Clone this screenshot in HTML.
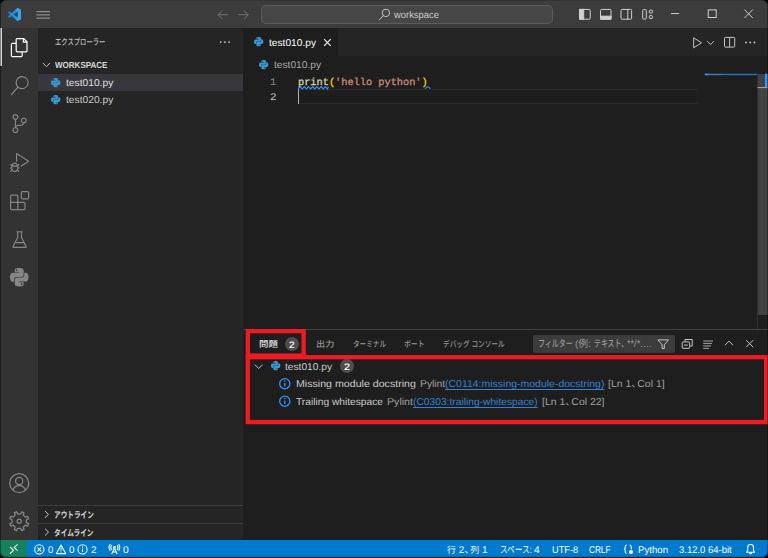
<!DOCTYPE html>
<html lang="ja">
<head>
<meta charset="utf-8">
<title>test010.py - workspace - Visual Studio Code</title>
<style>
html,body{margin:0;padding:0;background:#000;}
body{text-rendering:geometricPrecision;width:768px;height:558px;overflow:hidden;position:relative;font-family:"Liberation Sans","Noto Sans CJK JP",sans-serif;font-size:10.4px;color:#cccccc;}
#win{position:absolute;left:0;top:0;width:768px;height:558px;border-radius:6px 6px 6px 6px;overflow:hidden;background:#1e1e1e;}
.abs{position:absolute;}
.t{position:absolute;white-space:pre;line-height:1;transform-origin:0 0;}
svg{position:absolute;overflow:visible;}
#titlebar{left:0;top:0;width:768px;height:28px;background:#3c3c3c;}
#search{left:261px;top:5px;width:292px;height:18.5px;box-sizing:border-box;background:#464646;border:1px solid #5c5c5c;border-radius:5px;}
#activity{left:0;top:28px;width:38.4px;height:512.4px;background:#333333;}
#actind{left:0;top:28px;width:1.6px;height:38.4px;background:#d7d7d7;}
#sidebar{left:38.4px;top:28px;width:205px;height:512.4px;background:#252526;}
#selrow{left:38.4px;top:73.6px;width:204.6px;height:17.6px;background:#37373d;}
.hline{height:1px;background:#3c3c3c;}
#tabbar{left:243.4px;top:28px;width:525px;height:28px;background:#252526;}
#tab{left:243.4px;top:28px;width:94.6px;height:28px;background:#1e1e1e;}
#editor{left:243.4px;top:56px;width:525px;height:273px;background:#1e1e1e;}
#curline{left:298px;top:88.8px;width:400px;height:15.2px;box-sizing:border-box;border-top:1.2px solid #2a2a2a;border-bottom:1.2px solid #2a2a2a;}
#cursor{left:297.6px;top:89.4px;width:1.6px;height:14.2px;background:#aeafad;}
#vscroll{left:757px;top:73.6px;width:11px;height:241px;background:#424242;}
#vtrack{left:757px;top:73.6px;width:1px;height:255px;background:#303030;}
#panel{left:243.4px;top:328.6px;width:525px;height:212px;background:#1e1e1e;border-top:1px solid #424242;box-sizing:border-box;}
#filter{left:533px;top:334.6px;width:142px;height:18.8px;background:#3c3c3c;border-radius:2px;}
.badge{width:14.4px;height:14.4px;border-radius:7.2px;background:#4d4d4d;}
.red{box-sizing:border-box;border:4px solid #ed1c24;}
#status{left:0;top:540.4px;width:768px;height:17.6px;background:#007acc;color:#fff;}
#remote{left:0;top:540.4px;width:27px;height:17.6px;background:#16825d;}
.mono{font-family:"Liberation Mono",monospace;}
</style>
</head>
<body>
<div id="win">
<!-- TITLE BAR -->
<div class="abs" id="titlebar"></div>
<div class="abs" id="search"></div>
<svg style="left:8px;top:8px" width="13" height="13" viewBox="0 0 100 100"><defs><linearGradient id="vg" x1="0" y1="0" x2="1" y2="0"><stop offset="0" stop-color="#1683d2"/><stop offset="0.62" stop-color="#1f95e4"/><stop offset="0.75" stop-color="#2eaaf6"/><stop offset="1" stop-color="#2eaaf6"/></linearGradient></defs><path fill="url(#vg)" fill-rule="evenodd" d="M70.9119 99.3171C72.4869 99.9307 74.2828 99.8914 75.8725 99.1264L96.4608 89.2197C98.6242 88.1787 100 85.9892 100 83.5872V16.4133C100 14.0113 98.6243 11.8218 96.4609 10.7808L75.8725 0.873756C73.7862 -0.130129 71.3446 0.11576 69.5135 1.44695C69.252 1.63711 69.0028 1.84943 68.769 2.08341L29.3551 38.0415L12.1872 25.0096C10.589 23.7965 8.35363 23.8959 6.86933 25.2461L1.36303 30.2549C-0.452552 31.9064 -0.454633 34.7627 1.35853 36.417L16.2471 50.0001L1.35853 63.5832C-0.454633 65.2374 -0.452552 68.0938 1.36303 69.7453L6.86933 74.7541C8.35363 76.1043 10.589 76.2037 12.1872 74.9905L29.3551 61.9587L68.769 97.9167C69.3925 98.5406 70.1246 99.0104 70.9119 99.3171ZM75.0152 27.2989L45.1091 50.0001L75.0152 72.7012V27.2989Z"/></svg>
<svg style="left:0;top:0" width="768" height="28" viewBox="0 0 768 28" fill="none" stroke-linecap="butt">
<g stroke="#b4b4b4" stroke-width="0.85"><path d="M36.4 11.7H50M36.4 14.9H50M36.4 18.1H50"/></g>
<g stroke="#707070" stroke-width="1"><path d="M227.8 14.7H218M222.3 10.4L218 14.7l4.3 4.3"/><path d="M238.4 14.7H248.2M243.9 10.4l4.3 4.3-4.3 4.3"/></g>
<g stroke="#c4c4c4" stroke-width="1"><circle cx="385.9" cy="12.9" r="3.7"/><path d="M383.3 15.7L379 20"/></g>
<g stroke="#cfcfcf" stroke-width="1">
<rect x="579.5" y="9.4" width="10.7" height="9.8" rx="1"/><rect x="579.5" y="9.4" width="4.2" height="9.8" fill="#cfcfcf"/>
<rect x="600.5" y="9.4" width="10.5" height="9.8" rx="1"/><rect x="600.5" y="16.2" width="10.5" height="3" fill="#cfcfcf"/>
<rect x="621" y="9.4" width="10.6" height="9.8" rx="1"/><path d="M627.8 9.4V19.2"/>
<rect x="642.7" y="9.6" width="3.6" height="9.4" rx="0.8"/><rect x="649.4" y="10.2" width="3" height="2.9" rx="0.6"/><rect x="649.4" y="15.6" width="3" height="2.900" rx="0.6"/>
</g>
<g stroke="#e0e0e0" stroke-width="0.9"><path d="M671 13.6H679.2"/><rect x="708.2" y="9.9" width="8" height="7.6"/><path d="M744.4 9.6L752.8 18M752.8 9.6L744.4 18"/></g>
</svg>

<!-- ACTIVITY BAR -->
<div class="abs" id="activity"></div>
<div class="abs" id="actind"></div>
<svg style="left:9.6px;top:37.6px" width="19.2" height="19.2" viewBox="0 0 24 24" fill="#ffffff"><path d="M17.5 0h-9L7 1.5V6H2.5L1 7.5v15.07L2.5 24h12.07L16 22.57V18h4.7l1.3-1.43V4.5L17.5 0zm0 2.12l2.38 2.38H17.5V2.12zm-3 20.38h-12v-15H7v9.07L8.5 18h6v4.5zm6-6h-12v-15H16V6h4.5v10.5z"/></svg>
<svg style="left:9.6px;top:76px" width="19.2" height="19.2" viewBox="0 0 24 24" fill="#858585"><path d="M15.25 0a8.25 8.25 0 0 0-6.18 13.72L1 22.88l1.12 1.12 8.05-9.12A8.251 8.251 0 1 0 15.25.01V0zm0 15a6.75 6.75 0 1 1 0-13.5 6.75 6.75 0 0 1 0 13.5z"/></svg>
<svg style="left:9.6px;top:114.4px" width="19.2" height="19.2" viewBox="0 0 24 24" fill="#858585"><path d="M21.007 8.222A3.738 3.738 0 0 0 15.045 5.2a3.737 3.737 0 0 0 1.156 6.583 2.988 2.988 0 0 1-2.668 1.67h-2.99a4.456 4.456 0 0 0-2.989 1.165V7.4a3.737 3.737 0 1 0-1.494 0v9.117a3.776 3.776 0 1 0 1.816.099 2.99 2.99 0 0 1 2.668-1.667h2.99a4.484 4.484 0 0 0 4.223-3.039 3.736 3.736 0 0 0 3.25-3.687zM4.565 3.738a2.242 2.242 0 1 1 4.484 0 2.242 2.242 0 0 1-4.484 0zm4.484 16.441a2.242 2.242 0 1 1-4.484 0 2.242 2.242 0 0 1 4.484 0zm8.221-9.715a2.242 2.242 0 1 1 0-4.485 2.242 2.242 0 0 1 0 4.485z"/></svg>
<svg style="left:9.6px;top:152.8px" width="19.2" height="19.2" viewBox="0 0 24 24" fill="#858585"><path d="M10.94 13.5l-1.32 1.32a3.73 3.73 0 0 0-7.24 0L1.06 13.5 0 14.56l1.72 1.72-.22.22V18H0v1.5h1.5v.08c.077.489.214.966.41 1.42L0 22.94 1.06 24l1.65-1.65A4.308 4.308 0 0 0 6 24a4.31 4.31 0 0 0 3.29-1.65L10.94 24 12 22.94 10.09 21c.198-.464.336-.951.41-1.45v-.1H12V18h-1.5v-1.5l-.22-.22L12 14.56l-1.06-1.06zM6 13.5a2.25 2.25 0 0 1 2.25 2.25h-4.5A2.25 2.25 0 0 1 6 13.5zm3 6a3.33 3.33 0 0 1-3 3 3.33 3.33 0 0 1-3-3v-2.25h6v2.25zm14.76-9.9v1.26L13.5 17.37V15.6l8.5-5.37L9 2v9.46a5.07 5.07 0 0 0-1.5-.72V.63L8.64 0l15.12 9.6z"/></svg>
<svg style="left:9.6px;top:191.2px" width="19.2" height="19.2" viewBox="0 0 24 24" fill="#858585"><path d="M13.5 1.5L15 0h7.5L24 1.5V9l-1.5 1.5H15L13.5 9V1.5zm1.5 0V9h7.5V1.5H15zM0 15V6l1.5-1.5H9L10.5 6v7.5H18l1.5 1.5v7.5L18 24H1.5L0 22.5V15zm9-1.5V6H1.5v7.5H9zM9 15H1.5v7.5H9V15zm1.5 7.5H18V15h-7.5v7.5z"/></svg>
<svg style="left:9.6px;top:229.6px" width="19.2" height="19.2" viewBox="0 0 24 24" fill="none" stroke="#858585" stroke-width="1.5" stroke-linejoin="round"><path d="M8 2.2h8M9.6 2.2v7.3L3.9 20.3c-.4.8.1 1.5 1 1.5h14.2c.9 0 1.400-.7 1-1.500L14.400 9.500V2.200M6.300 15.800h11.400"/></svg>
<svg style="left:10.00px;top:268.40px" width="18.4" height="18.4" viewBox="0 0 24 24"><path fill="#858585" d="M14.25.18l.9.2.73.26.59.3.45.32.34.34.25.34.16.33.1.3.04.26.02.2-.01.13V8.5l-.05.63-.13.55-.21.46-.26.38-.3.31-.33.25-.35.19-.35.14-.33.1-.3.07-.26.04-.21.02H8.77l-.69.05-.59.14-.5.22-.41.27-.33.32-.27.35-.2.36-.15.37-.1.35-.07.32-.04.27-.02.21v3.06H3.17l-.21-.03-.28-.07-.32-.12-.35-.18-.36-.26-.36-.36-.35-.46-.32-.59-.28-.73-.21-.88-.14-1.05-.05-1.23.06-1.22.16-1.04.24-.87.32-.71.36-.57.4-.44.42-.33.42-.24.4-.16.36-.1.32-.05.24-.01h.16l.06.01h8.16v-.83H6.18l-.01-2.75-.02-.37.05-.34.11-.31.17-.28.25-.26.31-.23.38-.2.44-.18.51-.15.58-.12.64-.1.71-.06.77-.04.84-.02 1.27.05zm-6.3 1.98l-.23.33-.08.41.08.41.23.34.33.22.41.09.41-.09.33-.22.23-.34.08-.41-.08-.41-.23-.33-.33-.22-.41-.09-.41.09zm13.09 3.95l.28.06.32.12.35.18.36.27.36.35.35.47.32.59.28.73.21.88.14 1.04.05 1.23-.06 1.23-.16 1.04-.24.86-.32.71-.36.57-.4.45-.42.33-.42.24-.4.16-.36.09-.32.05-.24.02-.16-.01h-8.22v.82h5.84l.01 2.76.02.36-.05.34-.11.31-.17.29-.25.25-.31.24-.38.2-.44.17-.51.15-.58.13-.64.09-.71.07-.77.04-.84.01-1.27-.04-1.07-.14-.9-.2-.73-.25-.59-.3-.45-.33-.34-.34-.25-.34-.16-.33-.1-.3-.04-.25-.02-.2.01-.13v-5.34l.05-.64.13-.54.21-.46.26-.38.3-.32.33-.24.35-.2.35-.14.33-.1.3-.06.26-.04.21-.02.13-.01h5.84l.69-.05.59-.14.5-.21.41-.28.33-.32.27-.35.2-.36.15-.36.1-.35.07-.32.04-.28.02-.21V6.07h2.09l.14.01zm-6.47 14.25l-.23.33-.08.41.08.41.23.33.33.23.41.08.41-.08.33-.23.23-.33.08-.41-.08-.41-.23-.33-.33-.23-.41-.08-.41.08z"/></svg>
<svg style="left:9.2px;top:472.5px" width="20.4" height="20.4" viewBox="0 0 20.4 20.4" fill="none" stroke="#858585" stroke-width="1.3"><circle cx="10.2" cy="10.2" r="9.5"/><circle cx="10.2" cy="8" r="3.6"/><path d="M3.900 17.200a6.600 6.600 0 0 1 12.600 0"/></svg>
<svg style="left:9px;top:511px" width="20.4" height="20.4" viewBox="-10.2 -10.2 20.4 20.4" fill="none" stroke="#858585" stroke-width="1.3" stroke-linejoin="round"><path transform="scale(1.3) rotate(22.5)" vector-effect="non-scaling-stroke" d="M5.49 -1.09 L7.44 -0.94 L7.44 0.94 L5.49 1.09 L4.66 3.11 L5.93 4.60 L4.60 5.93 L3.11 4.66 L1.09 5.49 L0.94 7.44 L-0.94 7.44 L-1.09 5.49 L-3.11 4.66 L-4.60 5.93 L-5.93 4.60 L-4.66 3.11 L-5.49 1.09 L-7.44 0.94 L-7.44 -0.94 L-5.49 -1.09 L-4.66 -3.11 L-5.93 -4.60 L-4.60 -5.93 L-3.11 -4.66 L-1.09 -5.49 L-0.94 -7.44 L0.94 -7.44 L1.09 -5.49 L3.11 -4.66 L4.60 -5.93 L5.93 -4.60 L4.66 -3.11Z"/><circle r="2.1"/></svg>

<!-- SIDEBAR -->
<div class="abs" id="sidebar"></div>
<div class="abs" id="selrow"></div>
<div class="abs hline" style="left:38.4px;top:505px;width:205px"></div>
<div class="abs hline" style="left:38.4px;top:522.6px;width:205px"></div>
<svg style="left:51.35px;top:77.85px;opacity:1" width="9.3" height="9.3" viewBox="0 0 24 24"><path fill="#3a97d2" d="M14.25.18l.9.2.73.26.59.3.45.32.34.34.25.34.16.33.1.3.04.26.02.2-.01.13V8.5l-.05.63-.13.55-.21.46-.26.38-.3.31-.33.25-.35.19-.35.14-.33.1-.3.07-.26.04-.21.02H8.77l-.69.05-.59.14-.5.22-.41.27-.33.32-.27.35-.2.36-.15.37-.1.35-.07.32-.04.27-.02.21v3.06H3.17l-.21-.03-.28-.07-.32-.12-.35-.18-.36-.26-.36-.36-.35-.46-.32-.59-.28-.73-.21-.88-.14-1.05-.05-1.23.06-1.22.16-1.04.24-.87.32-.71.36-.57.4-.44.42-.33.42-.24.4-.16.36-.1.32-.05.24-.01h.16l.06.01h8.16v-.83H6.18l-.01-2.75-.02-.37.05-.34.11-.31.17-.28.25-.26.31-.23.38-.2.44-.18.51-.15.58-.12.64-.1.71-.06.77-.04.84-.02 1.27.05zm-6.3 1.98l-.23.33-.08.41.08.41.23.34.33.22.41.09.41-.09.33-.22.23-.34.08-.41-.08-.41-.23-.33-.33-.22-.41-.09-.41.09zm13.09 3.95l.28.06.32.12.35.18.36.27.36.35.35.47.32.59.28.73.21.88.14 1.04.05 1.23-.06 1.23-.16 1.04-.24.86-.32.71-.36.57-.4.45-.42.33-.42.24-.4.16-.36.09-.32.05-.24.02-.16-.01h-8.22v.82h5.84l.01 2.76.02.36-.05.34-.11.31-.17.29-.25.25-.31.24-.38.2-.44.17-.51.15-.58.13-.64.09-.71.07-.77.04-.84.01-1.27-.04-1.07-.14-.9-.2-.73-.25-.59-.3-.45-.33-.34-.34-.25-.34-.16-.33-.1-.3-.04-.25-.02-.2.01-.13v-5.34l.05-.64.13-.54.21-.46.26-.38.3-.32.33-.24.35-.2.35-.14.33-.1.3-.06.26-.04.21-.02.13-.01h5.84l.69-.05.59-.14.5-.21.41-.28.33-.32.27-.35.2-.36.15-.36.1-.35.07-.32.04-.28.02-.21V6.07h2.09l.14.01zm-6.47 14.25l-.23.33-.08.41.08.41.23.33.33.23.41.08.41-.08.33-.23.23-.33.08-.41-.08-.41-.23-.33-.33-.23-.41-.08-.41.08z"/></svg>
<svg style="left:51.35px;top:95.45px;opacity:1" width="9.3" height="9.3" viewBox="0 0 24 24"><path fill="#3a97d2" d="M14.25.18l.9.2.73.26.59.3.45.32.34.34.25.34.16.33.1.3.04.26.02.2-.01.13V8.5l-.05.63-.13.55-.21.46-.26.38-.3.31-.33.25-.35.19-.35.14-.33.1-.3.07-.26.04-.21.02H8.77l-.69.05-.59.14-.5.22-.41.27-.33.32-.27.35-.2.36-.15.37-.1.35-.07.32-.04.27-.02.21v3.06H3.17l-.21-.03-.28-.07-.32-.12-.35-.18-.36-.26-.36-.36-.35-.46-.32-.59-.28-.73-.21-.88-.14-1.05-.05-1.23.06-1.22.16-1.04.24-.87.32-.71.36-.57.4-.44.42-.33.42-.24.4-.16.36-.1.32-.05.24-.01h.16l.06.01h8.16v-.83H6.18l-.01-2.75-.02-.37.05-.34.11-.31.17-.28.25-.26.31-.23.38-.2.44-.18.51-.15.58-.12.64-.1.71-.06.77-.04.84-.02 1.27.05zm-6.3 1.98l-.23.33-.08.41.08.41.23.34.33.22.41.09.41-.09.33-.22.23-.34.08-.41-.08-.41-.23-.33-.33-.22-.41-.09-.41.09zm13.09 3.95l.28.06.32.12.35.18.36.27.36.35.35.47.32.59.28.73.21.88.14 1.04.05 1.23-.06 1.23-.16 1.04-.24.86-.32.71-.36.57-.4.45-.42.33-.42.24-.4.16-.36.09-.32.05-.24.02-.16-.01h-8.22v.82h5.84l.01 2.76.02.36-.05.34-.11.31-.17.29-.25.25-.31.24-.38.2-.44.17-.51.15-.58.13-.64.09-.71.07-.77.04-.84.01-1.27-.04-1.07-.14-.9-.2-.73-.25-.59-.3-.45-.33-.34-.34-.25-.34-.16-.33-.1-.3-.04-.25-.02-.2.01-.13v-5.34l.05-.64.13-.54.21-.46.26-.38.3-.32.33-.24.35-.2.35-.14.33-.1.3-.06.26-.04.21-.02.13-.01h5.84l.69-.05.59-.14.5-.21.41-.28.33-.32.27-.35.2-.36.15-.36.1-.35.07-.32.04-.28.02-.21V6.07h2.09l.14.01zm-6.47 14.25l-.23.33-.08.41.08.41.23.33.33.23.41.08.41-.08.33-.23.23-.33.08-.41-.08-.41-.23-.33-.33-.23-.41-.08-.41.08z"/></svg>
<svg style="left:0;top:0" width="244" height="558" viewBox="0 0 244 558" fill="none">
<g fill="#c5c5c5"><circle cx="220.7" cy="42.1" r="0.95"/><circle cx="224.9" cy="42.1" r="0.95"/><circle cx="229.100" cy="42.100" r="0.950"/></g>
<g stroke="#c5c5c5" stroke-width="1"><path d="M43 63l3.500 3.600 3.500-3.600"/><path d="M45 511l3.500 3.400-3.500 3.400"/><path d="M45 528.700l3.500 3.400-3.500 3.400"/></g>
</svg>

<!-- EDITOR -->
<div class="abs" id="tabbar"></div>
<div class="abs" id="tab"></div>
<div class="abs" id="editor"></div>
<div class="abs" id="curline"></div>
<div class="abs" id="cursor"></div>
<div class="abs" id="vscroll"></div>
<div class="abs" id="vtrack"></div>
<svg style="left:254.45px;top:36.95px;opacity:1" width="9.3" height="9.3" viewBox="0 0 24 24"><path fill="#3a97d2" d="M14.25.18l.9.2.73.26.59.3.45.32.34.34.25.34.16.33.1.3.04.26.02.2-.01.13V8.5l-.05.63-.13.55-.21.46-.26.38-.3.31-.33.25-.35.19-.35.14-.33.1-.3.07-.26.04-.21.02H8.77l-.69.05-.59.14-.5.22-.41.27-.33.32-.27.35-.2.36-.15.37-.1.35-.07.32-.04.27-.02.21v3.06H3.17l-.21-.03-.28-.07-.32-.12-.35-.18-.36-.26-.36-.36-.35-.46-.32-.59-.28-.73-.21-.88-.14-1.05-.05-1.23.06-1.22.16-1.04.24-.87.32-.71.36-.57.4-.44.42-.33.42-.24.4-.16.36-.1.32-.05.24-.01h.16l.06.01h8.16v-.83H6.18l-.01-2.75-.02-.37.05-.34.11-.31.17-.28.25-.26.31-.23.38-.2.44-.18.51-.15.58-.12.64-.1.71-.06.77-.04.84-.02 1.27.05zm-6.3 1.98l-.23.33-.08.41.08.41.23.34.33.22.41.09.41-.09.33-.22.23-.34.08-.41-.08-.41-.23-.33-.33-.22-.41-.09-.41.09zm13.09 3.95l.28.06.32.12.35.18.36.27.36.35.35.47.32.59.28.73.21.88.14 1.04.05 1.23-.06 1.23-.16 1.04-.24.86-.32.71-.36.57-.4.45-.42.33-.42.24-.4.16-.36.09-.32.05-.24.02-.16-.01h-8.22v.82h5.84l.01 2.76.02.36-.05.34-.11.31-.17.29-.25.25-.31.24-.38.2-.44.17-.51.15-.58.13-.64.09-.71.07-.77.04-.84.01-1.27-.04-1.07-.14-.9-.2-.73-.25-.59-.3-.45-.33-.34-.34-.25-.34-.16-.33-.1-.3-.04-.25-.02-.2.01-.13v-5.34l.05-.64.13-.54.21-.46.26-.38.3-.32.33-.24.35-.2.35-.14.33-.1.3-.06.26-.04.21-.02.13-.01h5.84l.69-.05.59-.14.5-.21.41-.28.33-.32.27-.35.2-.36.15-.36.1-.35.07-.32.04-.28.02-.21V6.07h2.09l.14.01zm-6.47 14.25l-.23.33-.08.41.08.41.23.33.33.23.41.08.41-.08.33-.23.23-.33.08-.41-.08-.41-.23-.33-.33-.23-.41-.08-.41.08z"/></svg>
<svg style="left:259.25px;top:60.15px;opacity:1" width="9.3" height="9.3" viewBox="0 0 24 24"><path fill="#3a97d2" d="M14.25.18l.9.2.73.26.59.3.45.32.34.34.25.34.16.33.1.3.04.26.02.2-.01.13V8.5l-.05.63-.13.55-.21.46-.26.38-.3.31-.33.25-.35.19-.35.14-.33.1-.3.07-.26.04-.21.02H8.77l-.69.05-.59.14-.5.22-.41.27-.33.32-.27.35-.2.36-.15.37-.1.35-.07.32-.04.27-.02.21v3.06H3.17l-.21-.03-.28-.07-.32-.12-.35-.18-.36-.26-.36-.36-.35-.46-.32-.59-.28-.73-.21-.88-.14-1.05-.05-1.23.06-1.22.16-1.04.24-.87.32-.71.36-.57.4-.44.42-.33.42-.24.4-.16.36-.1.32-.05.24-.01h.16l.06.01h8.16v-.83H6.18l-.01-2.75-.02-.37.05-.34.11-.31.17-.28.25-.26.31-.23.38-.2.44-.18.51-.15.58-.12.64-.1.71-.06.77-.04.84-.02 1.27.05zm-6.3 1.98l-.23.33-.08.41.08.41.23.34.33.22.41.09.41-.09.33-.22.23-.34.08-.41-.08-.41-.23-.33-.33-.22-.41-.09-.41.09zm13.09 3.95l.28.06.32.12.35.18.36.27.36.35.35.47.32.59.28.73.21.88.14 1.04.05 1.23-.06 1.23-.16 1.04-.24.86-.32.71-.36.57-.4.45-.42.33-.42.24-.4.16-.36.09-.32.05-.24.02-.16-.01h-8.22v.82h5.84l.01 2.76.02.36-.05.34-.11.31-.17.29-.25.25-.31.24-.38.2-.44.17-.51.15-.58.13-.64.09-.71.07-.77.04-.84.01-1.27-.04-1.07-.14-.9-.2-.73-.25-.59-.3-.45-.33-.34-.34-.25-.34-.16-.33-.1-.3-.04-.25-.02-.2.01-.13v-5.34l.05-.64.13-.54.21-.46.26-.38.3-.32.33-.24.35-.2.35-.14.33-.1.3-.06.26-.04.21-.02.13-.01h5.84l.69-.05.59-.14.5-.21.41-.28.33-.32.27-.35.2-.36.15-.36.1-.35.07-.32.04-.28.02-.21V6.07h2.09l.14.01zm-6.47 14.25l-.23.33-.08.41.08.41.23.33.33.23.41.08.41-.08.33-.23.23-.33.08-.41-.08-.41-.23-.33-.33-.23-.41-.08-.41.08z"/></svg>
<svg style="left:0;top:0" width="768" height="330" viewBox="0 0 768 330" fill="none">
<g stroke="#f0f0f0" stroke-width="1.15"><path d="M324.100 39.200l6.600 6.600M330.700 39.200l-6.600 6.600"/></g>
<g stroke="#c5c5c5" stroke-width="1" stroke-linejoin="round"><path d="M693.700 37.800v10l7.800-5z"/><path d="M707.300 41.200l3.300 3.300 3.300-3.300"/><rect x="724.500" y="37.400" width="10.200" height="9.700" rx="0.800"/><path d="M729.600 37.400v9.700"/></g>
<g fill="#c5c5c5"><circle cx="746" cy="42.500" r="0.950"/><circle cx="750.200" cy="42.500" r="0.950"/><circle cx="754.400" cy="42.500" r="0.950"/></g>
<path stroke="#3794ff" stroke-width="1.150" d="M298 88.95L300.10 86.65L302.20 88.95L304.30 86.65L306.40 88.95L308.50 86.65L310.60 88.95L312.70 86.65L314.80 88.95L316.90 86.65L319.00 88.95L321.10 86.65L323.20 88.95L325.30 86.65L327.40 88.95L328.40 86.65"/>
<path stroke="#3794ff" stroke-width="1.100" d="M425 88.600L427.700 86.600L430.400 88.600"/>
<rect x="704.800" y="73.700" width="52.200" height="1.500" fill="#2470c0"/><rect x="704.800" y="73.700" width="4.200" height="1.500" fill="#3794ff"/><rect x="709.500" y="74" width="12" height="0.900" fill="#6b7f96" opacity="0.700"/>
<rect x="765" y="73.700" width="2.600" height="13.400" fill="#3794ff"/><rect x="757.500" y="87" width="10.500" height="1.100" fill="#a0a0a0"/>
</svg>

<!-- PANEL -->
<div class="abs" id="panel"></div>
<div class="abs" id="filter"></div>
<div class="abs badge" style="left:284.6px;top:336.9px"></div>
<div class="abs badge" style="left:339.6px;top:359px"></div>
<svg style="left:270.55px;top:361.35px;opacity:1" width="9.3" height="9.3" viewBox="0 0 24 24"><path fill="#3a97d2" d="M14.25.18l.9.2.73.26.59.3.45.32.34.34.25.34.16.33.1.3.04.26.02.2-.01.13V8.5l-.05.63-.13.55-.21.46-.26.38-.3.31-.33.25-.35.19-.35.14-.33.1-.3.07-.26.04-.21.02H8.77l-.69.05-.59.14-.5.22-.41.27-.33.32-.27.35-.2.36-.15.37-.1.35-.07.32-.04.27-.02.21v3.06H3.17l-.21-.03-.28-.07-.32-.12-.35-.18-.36-.26-.36-.36-.35-.46-.32-.59-.28-.73-.21-.88-.14-1.05-.05-1.23.06-1.22.16-1.04.24-.87.32-.71.36-.57.4-.44.42-.33.42-.24.4-.16.36-.1.32-.05.24-.01h.16l.06.01h8.16v-.83H6.18l-.01-2.75-.02-.37.05-.34.11-.31.17-.28.25-.26.31-.23.38-.2.44-.18.51-.15.58-.12.64-.1.71-.06.77-.04.84-.02 1.27.05zm-6.3 1.98l-.23.33-.08.41.08.41.23.34.33.22.41.09.41-.09.33-.22.23-.34.08-.41-.08-.41-.23-.33-.33-.22-.41-.09-.41.09zm13.09 3.95l.28.06.32.12.35.18.36.27.36.35.35.47.32.59.28.73.21.88.14 1.04.05 1.23-.06 1.23-.16 1.04-.24.86-.32.71-.36.57-.4.45-.42.33-.42.24-.4.16-.36.09-.32.05-.24.02-.16-.01h-8.22v.82h5.84l.01 2.76.02.36-.05.34-.11.31-.17.29-.25.25-.31.24-.38.2-.44.17-.51.15-.58.13-.64.09-.71.07-.77.04-.84.01-1.27-.04-1.07-.14-.9-.2-.73-.25-.59-.3-.45-.33-.34-.34-.25-.34-.16-.33-.1-.3-.04-.25-.02-.2.01-.13v-5.34l.05-.64.13-.54.21-.46.26-.38.3-.32.33-.24.35-.2.35-.14.33-.1.3-.06.26-.04.21-.02.13-.01h5.84l.69-.05.59-.14.5-.21.41-.28.33-.32.27-.35.2-.36.15-.36.1-.35.07-.32.04-.28.02-.21V6.07h2.09l.14.01zm-6.47 14.25l-.23.33-.08.41.08.41.23.33.33.23.41.08.41-.08.33-.23.23-.33.08-.41-.08-.41-.23-.33-.33-.23-.41-.08-.41.08z"/></svg>
<svg style="left:0;top:0" width="768" height="558" viewBox="0 0 768 558" fill="none">
<g stroke="#c5c5c5" stroke-width="1"><path d="M254.800 364.600l3.900 3.900 3.900-3.900"/></g>
<g stroke="#3794ff" stroke-width="1.250"><circle cx="284.800" cy="383.700" r="5.100"/><path d="M284.800 382.900v3.600M284.800 380.500v1.300"/><circle cx="284.800" cy="401.200" r="5.100"/><path d="M284.800 400.400v3.600M284.800 398v1.300"/></g>
<g stroke="#c5c5c5" stroke-width="1" stroke-linejoin="round">
<path d="M657.900 339.900h10.600l-4.200 4.900v3.700h-2.200v-3.700z"/>
<path d="M685 341.500v-2h7.200v6.500h-2"/><rect x="682.200" y="341.900" width="7.400" height="6.400" rx="0.600"/><path d="M684 345.100h3.800"/>
<path d="M703.2 341h9.8M703.2 343.4h8.800M703.2 345.900h7.800M703.2 348.300h5.800" stroke-width="0.800"/>
<path d="M725 345.200l4-4.100 4 4.100"/>
<path d="M746.200 340.200l7 7M753.200 340.200l-7 7"/>
</g>
</svg>

<!-- STATUS -->
<div class="abs" id="status"></div>
<div class="abs" id="remote"></div>
<svg style="left:0;top:0" width="768" height="558" viewBox="0 0 768 558" fill="none" stroke="#ffffff" stroke-width="1.050">
<path d="M10 547l3.500 3.300-3.500 3.300M17.500 544.500l-3.300 3.100 3.300 3.100"/>
<circle cx="39.300" cy="549.400" r="4.600"/><path d="M37.400 547.500l3.800 3.800M41.200 547.500l-3.800 3.800"/>
<path d="M61.050 544.900l4.600 8.700h-9.200z" stroke-linejoin="round"/><path d="M61.050 547.800v3M61.050 551.600v1"/>
<circle cx="82.500" cy="549.400" r="4.600"/><path d="M82.500 548.700v3.300M82.500 546.600v1.100"/>
<path d="M114.400 548.200l-2.700 5.800M114.400 548.200l2.700 5.800M112.700 552h3.400"/><circle cx="114.400" cy="547.400" r="0.900"/><path d="M111.900 545a3.500 3.500 0 0 0 0 4.800M116.900 545a3.500 3.500 0 0 1 0 4.800M110.300 544.200a5.300 5.300 0 0 0 0 6.600M118.500 544.200a5.300 5.300 0 0 1 0 6.600"/>
<path d="M626.700 545c-1.300 0-1.500.5-1.500 1.500v1.400c0 .8-.5 1.200-1.300 1.200c.8 0 1.300.4 1.300 1.200v1.400c0 1 .2 1.500 1.500 1.500M629.600 545c1.300 0 1.500.5 1.500 1.500v1.400c0 .5.300.9.800 1.100"/><circle cx="631" cy="552.100" r="2" fill="#ffffff" stroke="none"/>
<path d="M746.600 552.200h8l-1.100-1.700v-3.100a2.900 2.900 0 0 0-5.800 0v3.100zM749.500 552.700a1.100 1.100 0 0 0 2.200 0" stroke-linejoin="round"/>
</svg>

<div class="t" style="left:393.80px;top:11.10px;font-size:9.8px;color:#cccccc;transform:scaleX(0.9591);">workspace</div>
<div class="t" style="left:54.66px;top:37.80px;font-size:8.8px;color:#bbbbbb;transform:scaleX(0.7182);font-weight:500">エクスプローラー</div>
<div class="t" style="left:55.00px;top:60.90px;font-size:8.8px;color:#d8d8d8;transform:scaleX(0.9118);font-weight:700">WORKSPACE</div>
<div class="t" style="left:65.60px;top:78.80px;font-size:10.0px;color:#e0e0e0;transform:scaleX(1.0239);">test010.py</div>
<div class="t" style="left:65.60px;top:96.40px;font-size:10.0px;color:#cccccc;transform:scaleX(1.0239);">test020.py</div>
<div class="t" style="left:54.05px;top:511.00px;font-size:8.8px;color:#d8d8d8;transform:scaleX(0.7532);font-weight:700">アウトライン</div>
<div class="t" style="left:54.23px;top:528.60px;font-size:8.8px;color:#d8d8d8;transform:scaleX(0.7569);font-weight:700">タイムライン</div>
<div class="t" style="left:268.80px;top:38.60px;font-size:10.0px;color:#ffffff;transform:scaleX(1.0196);">test010.py</div>
<div class="t" style="left:273.80px;top:61.10px;font-size:10.0px;color:#a9a9a9;transform:scaleX(1.0196);">test010.py</div>
<div class="t mono" style="left:270.34px;top:78.70px;font-size:10.2px;color:#858585;transform:scaleX(1.0200);">1</div>
<div class="t mono" style="left:270.29px;top:93.90px;font-size:10.2px;color:#c6c6c6;transform:scaleX(1.0737);">2</div>
<div class="t mono" style="left:297.54px;top:78.70px;font-size:10.2px;color:#d4d4d4;transform:scaleX(1.0099);-webkit-text-stroke:0.25px"><span style="color:#dcdcaa">print</span><span style="color:#ffd700">(</span><span style="color:#ce9178">'hello python'</span><span style="color:#ffd700">)</span></div>
<div class="t" style="left:258.65px;top:339.90px;font-size:8.3px;color:#e7e7e7;transform:scaleX(1.1355);font-weight:500">問題</div>
<div class="t" style="left:289.23px;top:339.60px;font-size:9.4px;color:#ffffff;transform:scaleX(1.0667);-webkit-text-stroke:0.15px">2</div>
<div class="t" style="left:316.17px;top:339.90px;font-size:8.3px;color:#969696;transform:scaleX(1.1016);font-weight:500">出力</div>
<div class="t" style="left:352.70px;top:339.90px;font-size:8.3px;color:#969696;transform:scaleX(0.7975);font-weight:500">ターミナル</div>
<div class="t" style="left:403.79px;top:339.90px;font-size:8.3px;color:#969696;transform:scaleX(0.8258);font-weight:500">ポート</div>
<div class="t" style="left:442.50px;top:339.90px;font-size:8.3px;color:#969696;transform:scaleX(0.8000);font-weight:500">デバッグ コンソール</div>
<div class="t" style="left:537.71px;top:340.40px;font-size:9.8px;color:#989898;transform:scaleX(0.7102);font-weight:500">フィルター</div>
<div class="t" style="left:575.00px;top:340.40px;font-size:9.8px;color:#989898;transform:scaleX(1.0069);">(例:</div>
<div class="t" style="left:594.27px;top:340.40px;font-size:9.8px;color:#989898;transform:scaleX(0.7055);font-weight:500">テキスト、</div>
<div class="t" style="left:627.38px;top:340.40px;font-size:10.4px;color:#989898;transform:scaleX(0.8785);">**/*.…</div>
<div class="t" style="left:284.90px;top:362.60px;font-size:10.0px;color:#cccccc;transform:scaleX(1.0196);">test010.py</div>
<div class="t" style="left:344.21px;top:361.80px;font-size:9.4px;color:#ffffff;transform:scaleX(1.1556);-webkit-text-stroke:0.15px">2</div>
<div class="t" style="left:295.70px;top:380.20px;font-size:10.0px;color:#cccccc;transform:scaleX(1.0628);">Missing module docstring</div>
<div class="t" style="left:419.53px;top:380.20px;font-size:10.0px;color:#a0a0a0;transform:scaleX(1.0316);">Pylint</div>
<div class="t" style="left:444.78px;top:380.20px;font-size:10.0px;color:#3582d4;transform:scaleX(1.0483);text-decoration:underline;text-underline-offset:1.5px;text-decoration-thickness:0.8px">(C0114:missing-module-docstring)</div>
<div class="t" style="left:608.12px;top:380.20px;font-size:10.0px;color:#a0a0a0;transform:scaleX(1.0445);">[Ln 1<span style="margin-right:-.42em">、</span>Col 1]</div>
<div class="t" style="left:296.24px;top:397.80px;font-size:10.0px;color:#cccccc;transform:scaleX(1.0201);">Trailing whitespace</div>
<div class="t" style="left:387.20px;top:397.80px;font-size:10.0px;color:#a0a0a0;transform:scaleX(1.0611);">Pylint</div>
<div class="t" style="left:413.29px;top:397.80px;font-size:10.0px;color:#3582d4;transform:scaleX(1.0241);text-decoration:underline;text-underline-offset:1.5px;text-decoration-thickness:0.8px">(C0303:trailing-whitespace)</div>
<div class="t" style="left:541.92px;top:397.80px;font-size:10.0px;color:#a0a0a0;transform:scaleX(1.0455);">[Ln 1<span style="margin-right:-.42em">、</span>Col 22]</div>
<div class="t" style="left:48.06px;top:546.00px;font-size:9.8px;color:#ffffff;transform:scaleX(0.9684);">0</div>
<div class="t" style="left:69.15px;top:546.00px;font-size:9.8px;color:#ffffff;transform:scaleX(1.0105);">0</div>
<div class="t" style="left:90.59px;top:546.00px;font-size:9.8px;color:#ffffff;transform:scaleX(1.0222);">2</div>
<div class="t" style="left:122.74px;top:546.00px;font-size:9.8px;color:#ffffff;transform:scaleX(1.0526);">0</div>
<div class="t" style="left:447.04px;top:546.00px;font-size:9.8px;color:#ffffff;transform:scaleX(1.0205);"><span style="font-size:.9em">行</span> 2<span style="margin-right:-.42em">、</span><span style="font-size:.9em">列</span> 1</div>
<div class="t" style="left:500.02px;top:546.00px;font-size:9.8px;color:#ffffff;transform:scaleX(0.7819);">スペース:</div>
<div class="t" style="left:533.74px;top:546.00px;font-size:9.8px;color:#ffffff;transform:scaleX(1.0400);">4</div>
<div class="t" style="left:551.69px;top:546.00px;font-size:9.8px;color:#ffffff;transform:scaleX(0.9434);">UTF-8</div>
<div class="t" style="left:589.38px;top:546.00px;font-size:9.8px;color:#ffffff;transform:scaleX(0.8364);">CRLF</div>
<div class="t" style="left:638.06px;top:546.00px;font-size:9.8px;color:#ffffff;transform:scaleX(0.9846);">Python</div>
<div class="t" style="left:679.06px;top:546.00px;font-size:9.8px;color:#ffffff;transform:scaleX(0.9677);">3.12.0 64-bit</div>
<!-- annotations -->
<svg style="left:0;top:0" width="768" height="558" viewBox="0 0 768 558" fill="none" stroke="#ed1c24" stroke-width="4.3"><rect x="247.85" y="331.15" width="55.8" height="24.4"/><rect x="247.75" y="357.2" width="518.4" height="64.85"/></svg>
<div class="abs" style="left:0;top:0;width:768px;height:558px;border-radius:6px;box-shadow:inset 1px 0 rgba(0,0,0,.4),inset -1px 0 rgba(0,0,0,.3),inset 0 1px rgba(0,0,0,.15),inset 0 -1px rgba(25,25,25,.9),inset 0 -2px rgba(0,0,0,.12)"></div>
</div>
</body>
</html>
